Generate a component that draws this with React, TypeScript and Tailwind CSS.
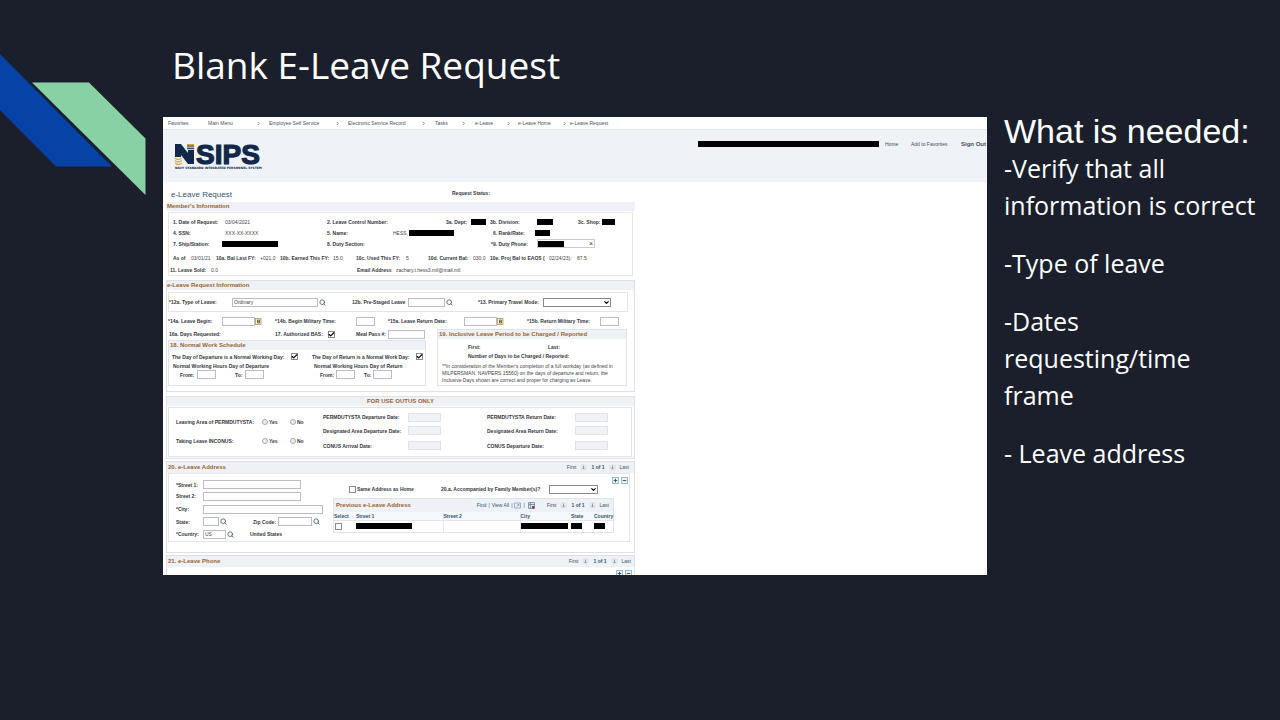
import React from "react";
import { Search, ChevronDown, Check } from "lucide-react";

type Kids = { children?: React.ReactNode; className?: string };

const inputBase =
  "block min-w-0 rounded-none border border-[#b9bcc2] bg-white px-px text-[5px] font-normal leading-[7px] text-[#444] outline-none";

function Row({ children, className = "" }: Kids) {
  return <div className={`grid items-center justify-start whitespace-nowrap ${className}`}>{children}</div>;
}

function Value({ children, className = "" }: Kids) {
  return <span className={`font-normal text-[#444] ${className}`}>{children}</span>;
}

function Redacted({ className = "" }: { className?: string }) {
  return <span className={`block h-[6px] bg-black ${className}`} />;
}

function Box({ id, className = "", value }: { id: string; className?: string; value?: string }) {
  return <input id={id} defaultValue={value} className={`${inputBase} h-[9px] ${className}`} />;
}

function Drop({ id, className = "" }: { id: string; className?: string }) {
  return (
    <span className={`relative block h-[9px] ${className}`}>
      <select id={id} className="block h-[9px] w-full appearance-none rounded-none border border-[#888] bg-white text-[5px]">
        <option value="" />
      </select>
      <ChevronDown className="pointer-events-none absolute right-px top-px size-[7px] text-black" strokeWidth={4} />
    </span>
  );
}

function Tick({ id, checked, label }: { id: string; checked?: boolean; label?: string }) {
  return (
    <span className="relative block size-[7px]">
      <input
        id={id}
        type="checkbox"
        aria-label={label}
        defaultChecked={checked}
        className="peer block size-[7px] appearance-none border border-[#888] bg-white"
      />
      <Check
        className="pointer-events-none absolute left-0 top-0 hidden size-[7px] text-black peer-checked:block"
        strokeWidth={4}
      />
    </span>
  );
}

function Radio({ id, name }: { id: string; name: string }) {
  return (
    <input
      id={id}
      name={name}
      type="radio"
      className="block size-[6px] appearance-none rounded-full border border-[#aaa] bg-[#eee]"
    />
  );
}

function Lookup({ label }: { label: string }) {
  return (
    <button type="button" aria-label={label} className="ml-px block size-[7px] text-[#47657f]">
      <Search className="size-[7px]" strokeWidth={3} />
    </button>
  );
}

function Calendar({ label }: { label: string }) {
  return (
    <button type="button" aria-label={label} className="block size-[7px]">
      <svg viewBox="0 0 14 14" className="size-[7px]">
        <rect x="1" y="1" width="11" height="12" fill="#f4edcf" stroke="#a39660" strokeWidth="1.5" />
        <path d="M5 4h4v6H5zM5 7h4" stroke="#5d4c22" strokeWidth="1.5" fill="none" />
      </svg>
    </button>
  );
}

function Heading({ children, className = "" }: Kids) {
  return (
    <h3 className={`bg-[#eef2f6] text-[6px] font-bold leading-[9px] text-[#9a6330] ${className}`}>{children}</h3>
  );
}

function Arrow({ label }: { label: string }) {
  return (
    <button type="button" aria-label={label} className="block size-[7px]">
      <svg viewBox="0 0 14 14" className="size-[7px]">
        <circle cx="7" cy="7" r="6" fill="#e9ecef" stroke="#d3d8dd" />
        <path d="M7 3v7M4.5 7.5L7 10l2.5-2.5" stroke="#7d8790" strokeWidth="1.5" fill="none" />
      </svg>
    </button>
  );
}

function Pager() {
  return (
    <div className="flex items-center gap-[4px] whitespace-nowrap text-[5px] font-normal leading-[9px] text-[#44525f]">
      <span>First</span>
      <Arrow label="Previous" />
      <span className="font-bold text-[#33556f]">1 of 1</span>
      <Arrow label="Next" />
      <span>Last</span>
    </div>
  );
}

const rowActions = [
  { label: "Add row", d: "M7 3.5v7M3.5 7h7" },
  { label: "Remove row", d: "M3.5 7h7" },
];

function AddRemove() {
  return (
    <div className="flex justify-end gap-[2px]">
      {rowActions.map(({ label, d }) => (
        <button key={label} type="button" aria-label={label} className="block size-[7px]">
          <svg viewBox="0 0 14 14" className="size-[7px]">
            <rect x="1" y="1" width="12" height="12" fill="#e9f3f8" stroke="#9cb8c8" strokeWidth="2" />
            <path d={d} stroke="#235f86" strokeWidth="2" />
          </svg>
        </button>
      ))}
    </div>
  );
}

const crumbs = [
  { text: "Employee Self Service", item: "w-[79px]", mark: "w-[12px]" },
  { text: "Electronic Service Record", item: "w-[86px]", mark: "w-[12px]" },
  { text: "Tasks", item: "w-[40px]", mark: "w-[13px]" },
  { text: "e-Leave", item: "w-[45px]", mark: "w-[13px]" },
  { text: "e-Leave Home", item: "w-[56px]", mark: "w-[11px]" },
  { text: "e-Leave Request", item: "w-[56px]", mark: "w-[7px]" },
];

function TopBar() {
  return (
    <header className="text-[5px] leading-[8px] text-[#46505e]">
      <nav
        aria-label="Breadcrumb"
        className="flex h-[13px] items-center whitespace-nowrap border-b border-[#e3e7ec] pl-[5px]"
      >
        <a href="#favorites" className="w-[40px]">Favorites</a>
        <a href="#menu" className="w-[49px]">Main Menu</a>
        {crumbs.map(({ text, item, mark }) => (
          <span key={text} className={`flex items-center ${item}`}>
            <span className={mark}>
              <svg viewBox="0 0 4 6" className="h-[5px] w-[3px]">
                <path d="M1 1l2 2-2 2" fill="none" stroke="#5a6470" strokeWidth="1" />
              </svg>
            </span>
            <a href="#step">{text}</a>
          </span>
        ))}
      </nav>
      <div className="flex h-[52px] items-start justify-between bg-[#eff2f7] pl-[11px]">
        <Logo />
        <div className="flex items-center whitespace-nowrap pr-px pt-[10px]">
          <Redacted className="mr-[6px] w-[181px]" />
          <a href="#home" className="w-[26px]">Home</a>
          <a href="#add" className="w-[50px]">Add to Favorites</a>
          <a href="#out" className="text-[6px] font-bold">Sign Out</a>
        </div>
      </div>
    </header>
  );
}

function Logo() {
  return (
    <svg viewBox="0 0 92 32" role="img" aria-label="NSIPS" className="mt-[12px] h-[32px] w-[92px]">
      <path d="M1 2h6l7 9V8h6v14h-6L7 13v2H1z" fill="#12284b" />
      <path d="M13 2.7h7M13 5.4h7" stroke="#d5a63c" strokeWidth="1.5" />
      <path d="M13 4h7M13 6.7h7" stroke="#12284b" strokeWidth="1" />
      <path d="M1 16q3 3 7 0M1 18.5q3 3 7 0M1 21q3 3 7 0" stroke="#d9ae45" strokeWidth="1.3" fill="none" />
      <text
        x="22"
        y="22"
        fontSize="28"
        fontWeight="700"
        fill="#12284b"
        stroke="#12284b"
        strokeWidth="1.2"
        fontFamily="Liberation Sans, sans-serif"
      >
        SIPS
      </text>
      <text x="1" y="27" fontSize="3" fontWeight="700" fill="#12284b" fontFamily="DejaVu Sans, sans-serif">
        NAVY STANDARD INTEGRATED PERSONNEL SYSTEM
      </text>
    </svg>
  );
}

function MemberInformation() {
  return (
    <section>
      <Heading className="pl-px">Member's Information</Heading>
      <div className="mx-[2px] mt-px border border-[#e9e4e2] pb-[2px] pt-[3px]">
        <Row className="h-[11px] grid-cols-[52px_102px_119px_25px_19px_47px_41px_24px_13px] pl-[4px]">
          <span>1. Date of Request:</span>
          <Value>03/04/2021</Value>
          <span>2. Leave Control Number:</span>
          <span>3a. Dept:</span>
          <Redacted className="w-[15px]" />
          <span>3b. Division:</span>
          <Redacted className="w-[16px]" />
          <span>3c. Shop:</span>
          <Redacted className="w-[13px]" />
        </Row>
        <Row className="h-[11px] grid-cols-[52px_102px_66px_16px_84px_42px_15px] pl-[4px]">
          <span>4. SSN:</span>
          <Value>XXX-XX-XXXX</Value>
          <span>5. Name:</span>
          <Value>HESS,</Value>
          <Redacted className="w-[45px]" />
          <span>6. Rank/Rate:</span>
          <Redacted className="w-[15px]" />
        </Row>
        <Row className="h-[11px] grid-cols-[49px_105px_164px_46px_58px] pl-[4px]">
          <span>7. Ship/Station:</span>
          <Redacted className="w-[56px]" />
          <span>8. Duty Section:</span>
          <label htmlFor="duty-phone">*9. Duty Phone:</label>
          <span className="flex h-[9px] items-center border border-[#c9ccd1] bg-white">
            <Redacted className="w-[26px]" />
            <input id="duty-phone" className="h-[6px] w-[25px] min-w-0 outline-none" />
            <button type="button" aria-label="Clear phone" className="text-[7px] font-normal leading-[6px]">×</button>
          </span>
        </Row>
        <Row className="h-[17px] grid-cols-[18px_25px_44px_20px_53px_23px_50px_22px_45px_17px_59px_28px_20px] pl-[4px]">
          <span>As of</span>
          <Value>03/01/21</Value>
          <span>10a. Bal Last FY:</span>
          <Value>+021.0</Value>
          <span>10b. Earned This FY:</span>
          <Value>15.0</Value>
          <span>10c. Used This FY:</span>
          <Value>5</Value>
          <span>10d. Current Bal:</span>
          <Value>030.0</Value>
          <span>10e. Proj Bal to EAOS (</span>
          <Value>02/24/23):</Value>
          <Value>87.5</Value>
        </Row>
        <Row className="h-[7px] grid-cols-[41px_146px_39px_100px] pl-px">
          <span>11. Leave Sold:</span>
          <Value>0.0</Value>
          <span>Email Address</span>
          <Value>zachary.t.hess3.mil@mail.mil</Value>
        </Row>
      </div>
    </section>
  );
}

function NormalSchedule() {
  return (
    <div className="h-[46px] border border-[#dfe3e8]">
      <Heading className="pl-px">18. Normal Work Schedule</Heading>
      <Row className="mt-[2px] h-[9px] grid-cols-[119px_21px_104px_7px] pl-[3px]">
        <label htmlFor="depart-normal">The Day of Departure is a Normal Working Day:</label>
        <Tick id="depart-normal" checked />
        <label htmlFor="return-normal">The Day of Return is a Normal Work Day:</label>
        <Tick id="return-normal" checked />
      </Row>
      <Row className="h-[9px] grid-cols-[141px_100px] pl-[4px]">
        <span>Normal Working Hours Day of Departure</span>
        <span>Normal Working Hours Day of Return</span>
      </Row>
      <Row className="h-[9px] grid-cols-[17px_38px_10px_75px_16px_28px_9px_19px] pl-[11px]">
        <label htmlFor="dep-from">From:</label>
        <Box id="dep-from" className="w-[19px]" />
        <label htmlFor="dep-to">To:</label>
        <Box id="dep-to" className="w-[19px]" />
        <label htmlFor="ret-from">From:</label>
        <Box id="ret-from" className="w-[19px]" />
        <label htmlFor="ret-to">To:</label>
        <Box id="ret-to" className="w-[19px]" />
      </Row>
    </div>
  );
}

function LeavePeriod() {
  return (
    <div className="mt-px h-[57px] border border-[#dfe3e8]">
      <Heading className="pl-px">19. Inclusive Leave Period to be Charged / Reported</Heading>
      <Row className="mt-[3px] h-[10px] grid-cols-[80px_40px] pl-[30px]">
        <span>First:</span>
        <span>Last:</span>
      </Row>
      <p className="pl-[30px] leading-[9px]">Number of Days to be Charged / Reported:</p>
      <p className="mt-[2px] whitespace-nowrap pl-[4px] font-normal leading-[7px] text-[#444]">
        **In consideration of the Member's completion of a full workday (as defined in
        <br />
        MILPERSMAN, NAVPERS 15560) on the days of departure and return, the
        <br />
        Inclusive Days shown are correct and proper for charging as Leave.
      </p>
    </div>
  );
}

function RequestInformation() {
  return (
    <section className="mt-[4px] h-[112px] border border-[#dde1e6]">
      <Heading>e-Leave Request Information</Heading>
      <div className="ml-px mr-[6px] mt-[2px] border border-[#e9e4e2]">
        <Row className="h-[18px] grid-cols-[63px_86px_34px_56px_37px_33px_65px_68px]">
          <label htmlFor="leave-type">*12a. Type of Leave:</label>
          <Box id="leave-type" value="Ordinary" />
          <Lookup label="Look up type of leave" />
          <label htmlFor="prestaged">12b. Pre-Staged Leave</label>
          <Box id="prestaged" />
          <Lookup label="Look up pre-staged leave" />
          <label htmlFor="travel-mode">*13. Primary Travel Mode:</label>
          <Drop id="travel-mode" />
        </Row>
      </div>
      <Row className="mt-[2px] h-[14px] grid-cols-[54px_33px_20px_81px_32px_76px_33px_30px_73px_19px] pl-px">
        <label htmlFor="begin">*14a. Leave Begin:</label>
        <Box id="begin" />
        <Calendar label="Choose begin date" />
        <label htmlFor="begin-time">*14b. Begin Military Time:</label>
        <Box id="begin-time" className="w-[19px]" />
        <label htmlFor="return">*15a. Leave Return Date:</label>
        <Box id="return" />
        <Calendar label="Choose return date" />
        <label htmlFor="return-time">*15b. Return Military Time:</label>
        <Box id="return-time" />
      </Row>
      <div className="grid grid-cols-[258px_190px] gap-[11px] pl-px">
        <div>
          <Row className="h-[12px] grid-cols-[106px_53px_28px_32px_37px] pl-px">
            <span>16a. Days Requested:</span>
            <label htmlFor="bas">17. Authorized BAS:</label>
            <Tick id="bas" checked />
            <label htmlFor="meal">Meal Pass #:</label>
            <Box id="meal" />
          </Row>
          <NormalSchedule />
        </div>
        <LeavePeriod />
      </div>
    </section>
  );
}

function YesNo({ label, name }: { label: string; name: string }) {
  return (
    <Row className="h-[19px] grid-cols-[86px_7px_21px_7px_20px]">
      <span>{label}</span>
      <Radio id={`${name}-yes`} name={name} />
      <label htmlFor={`${name}-yes`}>Yes</label>
      <Radio id={`${name}-no`} name={name} />
      <label htmlFor={`${name}-no`}>No</label>
    </Row>
  );
}

function DateList({ labels, cols }: { labels: string[]; cols: string }) {
  return (
    <div className="grid grid-rows-[14px_13px_17px]">
      {labels.map((text) => (
        <Row key={text} className={cols}>
          <label htmlFor={text}>{text}</label>
          <input id={text} disabled className="h-[9px] min-w-0 border border-[#dfe2ea] bg-[#f1f2f7]" />
        </Row>
      ))}
    </div>
  );
}

function Outus() {
  return (
    <section className="mt-[4px] h-[63px] border border-[#dde1e6]">
      <Heading className="text-center">FOR USE OUTUS ONLY</Heading>
      <div className="ml-px mr-[2px] mt-px grid h-[50px] grid-cols-[147px_164px_130px] border border-[#dfe3e8] pl-[7px] pt-[2px]">
        <div className="pt-[2px]">
          <YesNo label="Leaving Area of PERMDUTYSTA:" name="permdutysta" />
          <YesNo label="Taking Leave INCONUS:" name="inconus" />
        </div>
        <DateList
          cols="grid-cols-[85px_33px]"
          labels={["PERMDUTYSTA Departure Date:", "Designated Area Departure Date:", "CONUS Arrival Date:"]}
        />
        <DateList
          cols="grid-cols-[88px_33px]"
          labels={["PERMDUTYSTA Return Date:", "Designated Area Return Date:", "CONUS Departure Date:"]}
        />
      </div>
    </section>
  );
}

function PreviousAddress() {
  return (
    <div className="mt-[4px] w-[281px] border border-[#dfe3e8]">
      <div className="flex items-center justify-between bg-[#eef2f6] py-[2px] pl-[2px] pr-[4px]">
        <Heading>Previous e-Leave Address</Heading>
        <div className="flex items-center gap-[2px] text-[5px] font-normal leading-[9px] text-[#33556f]">
          <a href="#find" className="text-[#235f86]">Find</a>|<a href="#all">View All</a>|
          <button type="button" aria-label="Zoom table" className="block size-[7px]">
            <svg viewBox="0 0 14 14" className="size-[7px]">
              <path d="M1 2h12v10H1zM5 9l5-4M7 5h3v3" fill="none" stroke="#7d97b2" strokeWidth="1.5" />
            </svg>
          </button>
          |
          <button type="button" aria-label="Download table" className="ml-px mr-[10px] block size-[7px]">
            <svg viewBox="0 0 14 14" className="size-[7px]">
              <path d="M1 1h12v12H1zM1 5h12M5 1v12" fill="#dbe4ee" stroke="#687f9a" strokeWidth="1.5" />
              <path d="M8 8h5v5H8z" fill="#a33344" />
            </svg>
          </button>
          <Pager />
        </div>
      </div>
      <table className="w-full table-fixed border-collapse text-left">
        <thead>
          <tr className="h-[8px] bg-[#f5f8fc] text-[5px] leading-[6px] text-[#33556f]">
            <th className="w-[22px] p-0">Select</th>
            <th className="w-[87px] p-0">Street 1</th>
            <th className="w-[77px] border-l border-[#e3e7ec] p-0">Street 2</th>
            <th className="w-[51px] border-l border-[#e3e7ec] p-0">City</th>
            <th className="w-[23px] p-0">State</th>
            <th className="p-0">Country</th>
          </tr>
        </thead>
        <tbody>
          <tr className="h-[12px] border-t border-[#e3e7ec]">
            <td className="p-0 pl-px"><Tick id="select-row" label="Select row" /></td>
            <td className="p-0"><Redacted className="w-[56px]" /></td>
            <td className="border-l border-[#e3e7ec] p-0" />
            <td className="border-l border-[#e3e7ec] p-0"><Redacted className="w-[47px]" /></td>
            <td className="p-0"><Redacted className="w-[11px]" /></td>
            <td className="p-0"><Redacted className="w-[11px]" /></td>
          </tr>
        </tbody>
      </table>
    </div>
  );
}

function Address() {
  return (
    <section className="mt-[2px] h-[92px] border border-[#dde1e6]">
      <div className="flex items-center justify-between bg-[#eef2f6] py-px pl-px pr-[5px]">
        <Heading>20. e-Leave Address</Heading>
        <Pager />
      </div>
      <div className="ml-px mr-[4px] flex h-[69px] border border-[#e9e4e2]">
        <div className="w-[164px] shrink-0 pl-[7px] pt-[5px]">
          <Row className="h-[11px] grid-cols-[27px_98px]">
            <label htmlFor="street1">*Street 1:</label>
            <Box id="street1" />
          </Row>
          <Row className="h-[12px] grid-cols-[27px_98px]">
            <label htmlFor="street2">Street 2:</label>
            <Box id="street2" />
          </Row>
          <Row className="h-[14px] grid-cols-[27px_120px]">
            <label htmlFor="city">*City:</label>
            <Box id="city" />
          </Row>
          <Row className="h-[11px] grid-cols-[27px_16px_34px_25px_34px_8px]">
            <label htmlFor="state">State:</label>
            <Box id="state" />
            <Lookup label="Look up state" />
            <label htmlFor="zip">Zip Code:</label>
            <Box id="zip" />
            <Lookup label="Look up zip code" />
          </Row>
          <Row className="h-[14px] grid-cols-[27px_23px_24px_40px]">
            <label htmlFor="country">*Country:</label>
            <Box id="country" value="US" />
            <Lookup label="Look up country" />
            <span>United States</span>
          </Row>
        </div>
        <div className="min-w-0 flex-1 pr-px pt-[3px]">
          <AddRemove />
          <Row className="h-[10px] grid-cols-[8px_84px_108px_49px] pl-[16px]">
            <Tick id="same" />
            <label htmlFor="same">Same Address as Home</label>
            <label htmlFor="family">20.a. Accompanied by Family Member(s)?</label>
            <Drop id="family" />
          </Row>
          <PreviousAddress />
        </div>
      </div>
    </section>
  );
}

function Phone() {
  return (
    <section className="mt-[2px] border border-[#dde1e6]">
      <div className="flex items-center justify-between bg-[#eef2f6] py-px pl-px pr-[3px]">
        <Heading>21. e-Leave Phone</Heading>
        <Pager />
      </div>
      <div className="pr-[2px] pt-[3px]">
        <AddRemove />
      </div>
    </section>
  );
}

function LeaveForm() {
  return (
    <div className="h-[458px] overflow-hidden bg-white font-['Liberation_Sans',sans-serif]">
      <TopBar />
      <div className="ml-[3px] w-[469px] text-[5px] font-bold leading-[8px] text-[#34373d]">
        <div className="flex h-[20px] items-end">
          <h2 className="w-[286px] pl-[5px] text-[8px] font-normal leading-[14px] text-[#33556f]">e-Leave Request</h2>
          <span className="mb-[5px]">Request Status:</span>
        </div>
        <MemberInformation />
        <RequestInformation />
        <Outus />
        <Address />
        <Phone />
      </div>
    </div>
  );
}

export default function App() {
  return (
    <main className="grid min-h-screen grid-cols-[163px_minmax(0,1fr)_293px] content-start bg-[#1a1f2b] text-white">
      <svg viewBox="0 0 163 200" className="h-[200px] w-[163px]" aria-hidden="true">
        <path d="M0 54L112 166.5H56L0 110z" fill="#0742a6" />
        <path d="M32 82.5H89L145.5 138.5V195z" fill="#87d1a5" />
      </svg>
      <div>
        <h1 className="flex h-[117px] items-start pl-[9px] pt-[39px] font-['Open_Sans',sans-serif] text-[37px] leading-[52px]">
          Blank E-Leave Request
        </h1>
        <LeaveForm />
      </div>
      <aside className="pl-[17px] pt-[112px] font-['Open_Sans',sans-serif] text-[25px] leading-[37px]">
        <h2 className="font-['Liberation_Sans',sans-serif] text-[34px] leading-[38px]">What is needed:</h2>
        <p className="whitespace-nowrap">-Verify that all<br />information is correct</p>
        <p className="mt-[21px]">-Type of leave</p>
        <p className="mt-[21px]">-Dates<br />requesting/time<br />frame</p>
        <p className="mt-[21px]">- Leave address</p>
      </aside>
    </main>
  );
}
